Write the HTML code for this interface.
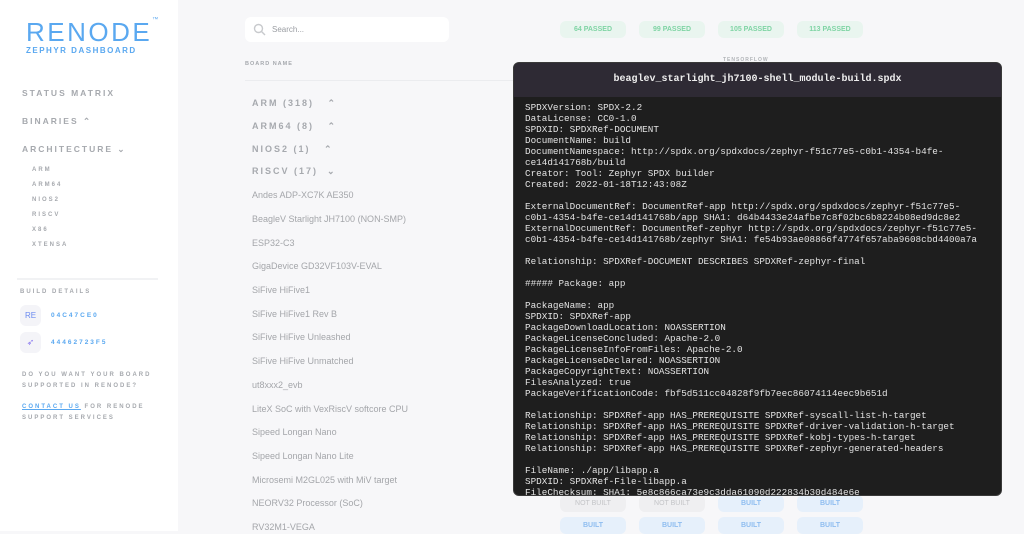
<!DOCTYPE html>
<html><head><meta charset="utf-8"><style>
*{margin:0;padding:0;box-sizing:border-box}
body{width:1024px;height:531px;overflow:hidden;background:#f7f7f9;font-family:"Liberation Sans",sans-serif;position:relative}
.side{position:absolute;left:0;top:0;width:178px;height:531px;background:#fff}
.a{position:absolute;font-weight:bold;letter-spacing:2px;color:#a6a9ae;white-space:nowrap}
.logo{position:absolute;left:26px;top:17px;font-size:26px;color:#5aa8f0;letter-spacing:2.5px;font-weight:normal}
.t{position:absolute;white-space:nowrap}
.row{position:absolute;left:252px;font-size:9px;color:#a4a6aa;white-space:nowrap}
.pill{position:absolute;width:66px;height:17px;border-radius:6px;font-size:7px;text-align:center;line-height:17px;font-weight:bold}
.modal{position:absolute;left:513px;top:62px;width:489px;height:434px;background:#1e1e1e;border-radius:6px;overflow:hidden;border:1px solid #3a3a3a}
.mh{height:34px;background:#2e2a34;color:#eee;font-family:"Liberation Mono",monospace;font-weight:bold;font-size:10px;text-align:center;line-height:34px}
pre{font-family:"Liberation Mono",monospace;font-size:9.3px;line-height:11px;color:#e2e2e2;padding:5px 0 0 11px}
</style></head><body>
<div class="side">
<div class="logo">RENODE<span style="font-size:6px;vertical-align:top">™</span></div>
<div class="a" style="left:26px;top:46px;font-size:8px;color:#5aa8f0;letter-spacing:1.5px">ZEPHYR DASHBOARD</div>
<div class="a" style="left:22px;top:88px;font-size:8.5px">STATUS MATRIX</div>
<div class="a" style="left:22px;top:116px;font-size:8.5px">BINARIES ⌃</div>
<div class="a" style="left:22px;top:144px;font-size:8.5px">ARCHITECTURE ⌄</div>
<div class="a" style="left:32px;top:167px;font-size:6px">ARM</div>
<div class="a" style="left:32px;top:182px;font-size:6px">ARM64</div>
<div class="a" style="left:32px;top:197px;font-size:6px">NIOS2</div>
<div class="a" style="left:32px;top:212px;font-size:6px">RISCV</div>
<div class="a" style="left:32px;top:227px;font-size:6px">X86</div>
<div class="a" style="left:32px;top:242px;font-size:6px">XTENSA</div>
<div style="position:absolute;left:17px;top:278px;width:141px;height:2px;background:#f1f2f4"></div>
<div class="a" style="left:20px;top:289px;font-size:6px">BUILD DETAILS</div>
<div style="position:absolute;left:20px;top:305px;width:21px;height:21px;border-radius:6px;background:#f4f4f8;color:#6a8af0;font-size:8px;text-align:center;line-height:21px">RE</div>
<div class="a" style="left:51px;top:312px;font-size:6.5px;color:#5aa8f0">04C47CE0</div>
<div style="position:absolute;left:20px;top:332px;width:21px;height:21px;border-radius:6px;background:#f4f4f8;color:#8a7af0;font-size:9px;text-align:center;line-height:21px">➶</div>
<div class="a" style="left:51px;top:339px;font-size:6.5px;color:#5aa8f0">44462723F5</div>
<div class="a" style="left:22px;top:370px;font-size:6px;line-height:11px">DO YOU WANT YOUR BOARD<br>SUPPORTED IN RENODE?</div>
<div class="a" style="left:22px;top:402px;font-size:6px;line-height:11px"><span style="color:#5aa8f0;text-decoration:underline">CONTACT US</span> FOR RENODE<br>SUPPORT SERVICES</div>
</div>
<div style="position:absolute;left:245px;top:17px;width:204px;height:25px;background:#fff;border-radius:6px"></div>
<svg style="position:absolute;left:253px;top:23px" width="13" height="13"><circle cx="5.5" cy="5.5" r="4" fill="none" stroke="#c8cacd" stroke-width="1.4"/><path d="M8.5 8.5L12 12" stroke="#c8cacd" stroke-width="1.4"/></svg>
<div class="t" style="left:272px;top:25px;font-size:8px;color:#9a9da2">Search...</div>
<div class="a" style="left:245px;top:61px;font-size:5.5px;letter-spacing:1px">BOARD NAME</div>
<div style="position:absolute;left:245px;top:80px;width:270px;height:1px;background:#ebecef"></div>
<div class="a" style="left:252px;top:98px;font-size:9px">ARM (318) &nbsp; ⌃</div>
<div class="a" style="left:252px;top:121px;font-size:9px">ARM64 (8) &nbsp; ⌃</div>
<div class="a" style="left:252px;top:144px;font-size:9px">NIOS2 (1) &nbsp; ⌃</div>
<div class="a" style="left:252px;top:166px;font-size:9px">RISCV (17) &nbsp;⌄</div>
<div class="row" style="top:190px">Andes ADP-XC7K AE350</div>
<div class="row" style="top:214px">BeagleV Starlight JH7100 (NON-SMP)</div>
<div class="row" style="top:238px">ESP32-C3</div>
<div class="row" style="top:261px">GigaDevice GD32VF103V-EVAL</div>
<div class="row" style="top:285px">SiFive HiFive1</div>
<div class="row" style="top:309px">SiFive HiFive1 Rev B</div>
<div class="row" style="top:332px">SiFive HiFive Unleashed</div>
<div class="row" style="top:356px">SiFive HiFive Unmatched</div>
<div class="row" style="top:380px">ut8xxx2_evb</div>
<div class="row" style="top:404px">LiteX SoC with VexRiscV softcore CPU</div>
<div class="row" style="top:427px">Sipeed Longan Nano</div>
<div class="row" style="top:451px">Sipeed Longan Nano Lite</div>
<div class="row" style="top:475px">Microsemi M2GL025 with MiV target</div>
<div class="row" style="top:498px">NEORV32 Processor (SoC)</div>
<div class="row" style="top:522px">RV32M1-VEGA</div>
<div class="pill" style="left:560px;top:21px;background:#e9f5ef;color:#7fd4a4">64 PASSED</div>
<div class="pill" style="left:639px;top:21px;background:#e9f5ef;color:#7fd4a4">99 PASSED</div>
<div class="pill" style="left:718px;top:21px;background:#e9f5ef;color:#7fd4a4">105 PASSED</div>
<div class="pill" style="left:797px;top:21px;background:#e9f5ef;color:#7fd4a4">113 PASSED</div>
<div class="a" style="left:723px;top:57px;font-size:5px;letter-spacing:1px;color:#b0b3b7">TENSORFLOW</div>
<div class="pill" style="left:560px;top:495px;background:#efeff1;color:#c3c4c7;font-weight:normal">NOT BUILT</div>
<div class="pill" style="left:639px;top:495px;background:#efeff1;color:#c3c4c7;font-weight:normal">NOT BUILT</div>
<div class="pill" style="left:718px;top:495px;background:#e6f0fb;color:#8fbdf0">BUILT</div>
<div class="pill" style="left:797px;top:495px;background:#e6f0fb;color:#8fbdf0">BUILT</div>
<div class="pill" style="left:560px;top:517px;background:#e6f0fb;color:#8fbdf0">BUILT</div>
<div class="pill" style="left:639px;top:517px;background:#e6f0fb;color:#8fbdf0">BUILT</div>
<div class="pill" style="left:718px;top:517px;background:#e6f0fb;color:#8fbdf0">BUILT</div>
<div class="pill" style="left:797px;top:517px;background:#e6f0fb;color:#8fbdf0">BUILT</div>
<div class="modal"><div class="mh">beaglev_starlight_jh7100-shell_module-build.spdx</div>
<pre>SPDXVersion: SPDX-2.2
DataLicense: CC0-1.0
SPDXID: SPDXRef-DOCUMENT
DocumentName: build
DocumentNamespace: http://spdx.org/spdxdocs/zephyr-f51c77e5-c0b1-4354-b4fe-
ce14d141768b/build
Creator: Tool: Zephyr SPDX builder
Created: 2022-01-18T12:43:08Z

ExternalDocumentRef: DocumentRef-app http://spdx.org/spdxdocs/zephyr-f51c77e5-
c0b1-4354-b4fe-ce14d141768b/app SHA1: d64b4433e24afbe7c8f02bc6b8224b08ed9dc8e2
ExternalDocumentRef: DocumentRef-zephyr http://spdx.org/spdxdocs/zephyr-f51c77e5-
c0b1-4354-b4fe-ce14d141768b/zephyr SHA1: fe54b93ae08866f4774f657aba9608cbd4400a7a

Relationship: SPDXRef-DOCUMENT DESCRIBES SPDXRef-zephyr-final

##### Package: app

PackageName: app
SPDXID: SPDXRef-app
PackageDownloadLocation: NOASSERTION
PackageLicenseConcluded: Apache-2.0
PackageLicenseInfoFromFiles: Apache-2.0
PackageLicenseDeclared: NOASSERTION
PackageCopyrightText: NOASSERTION
FilesAnalyzed: true
PackageVerificationCode: fbf5d511cc04828f9fb7eec86074114eec9b651d

Relationship: SPDXRef-app HAS_PREREQUISITE SPDXRef-syscall-list-h-target
Relationship: SPDXRef-app HAS_PREREQUISITE SPDXRef-driver-validation-h-target
Relationship: SPDXRef-app HAS_PREREQUISITE SPDXRef-kobj-types-h-target
Relationship: SPDXRef-app HAS_PREREQUISITE SPDXRef-zephyr-generated-headers

FileName: ./app/libapp.a
SPDXID: SPDXRef-File-libapp.a
FileChecksum: SHA1: 5e8c866ca73e9c3dda61090d222834b30d484e6e</pre></div>
</body></html>
